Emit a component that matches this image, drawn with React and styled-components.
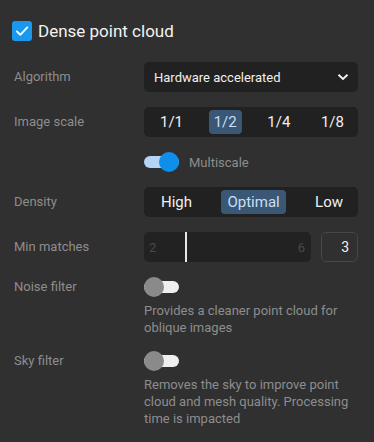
import React from "react";
import styled, { createGlobalStyle } from "styled-components";

const Global = createGlobalStyle`
  html, body { margin: 0; padding: 0; background: #303030; }
  body { font-family: Roboto, "Noto Sans", sans-serif; -webkit-font-smoothing: antialiased; }
`;

const Panel = styled.div`
  width: 374px;
  height: 442px;
  box-sizing: border-box;
  padding: 21px 16px 0 12px;
  background: #303030;
  overflow: hidden;
`;

const Header = styled.label`
  display: flex;
  align-items: center;
  gap: 6px;
  height: 20px;
`;

const CheckBox = styled.span`
  width: 20px;
  height: 20px;
  border-radius: 3px;
  background: #1a98ee;
  display: flex;
  align-items: center;
  justify-content: center;
`;

const Title = styled.span`
  font-size: 17px;
  color: #f2f2f2;
  line-height: 20px;
`;

const Form = styled.div`
  margin-top: 21px;
  padding-left: 2px;
  display: flex;
  flex-direction: column;
  gap: 15px;
`;

const Row = styled.div`
  display: grid;
  grid-template-columns: 130px 214px;
  align-items: start;
`;

const Label = styled.div`
  font-size: 13px;
  color: #8d8d8d;
  line-height: ${(p) => p.$h}px;
  height: ${(p) => p.$h}px;
`;

const Control = styled.div`
  display: flex;
  flex-direction: column;
`;

const Select = styled.div`
  height: 30px;
  border-radius: 5px;
  background: #212121;
  display: flex;
  align-items: center;
  justify-content: space-between;
  padding: 0 9px 0 10px;
  font-size: 13px;
  color: #f0f0f0;
`;

const Segmented = styled.div`
  height: 30px;
  box-sizing: border-box;
  border-radius: 5px;
  background: #212121;
  display: flex;
  align-items: center;
  justify-content: space-between;
  padding: 0 9px 0 11px;
`;

const Segment = styled.div`
  height: 24px;
  line-height: 24px;
  padding: 0 ${(p) => p.$pad}px;
  border-radius: 4px;
  font-size: 15px;
  color: ${(p) => (p.$active ? "#c9dff3" : "#f0f0f0")};
  background: ${(p) => (p.$active ? "#3a5876" : "transparent")};
`;

const ToggleLine = styled.div`
  display: flex;
  align-items: center;
  gap: 10px;
  height: 20px;
`;

const Track = styled.div`
  position: relative;
  width: 35px;
  height: 20px;
  flex: none;
  &::before {
    content: "";
    position: absolute;
    left: 0;
    right: 0;
    top: 4px;
    height: 12px;
    border-radius: 6px;
    background: ${(p) => (p.$on ? "#b4d5f4" : "#efefef")};
  }
`;

const Knob = styled.span`
  position: absolute;
  top: 0;
  ${(p) => (p.$on ? "right: 0;" : "left: 0;")}
  width: 20px;
  height: 20px;
  border-radius: 50%;
  background: ${(p) => (p.$on ? "#0d8fea" : "#8a8a8a")};
`;

const ToggleText = styled.span`
  font-size: 13px;
  color: #8d8d8d;
`;

const Desc = styled.div`
  margin-top: 5px;
  font-size: 13px;
  line-height: 17px;
  color: #8d8d8d;
`;

const SliderLine = styled.div`
  display: flex;
  gap: 10px;
`;

const SliderBox = styled.div`
  position: relative;
  flex: 1;
  height: 30px;
  border-radius: 5px;
  background: #222222;
  display: flex;
  align-items: center;
  justify-content: space-between;
  padding: 0 6px 0 5px;
  font-size: 13px;
  color: #4a4a4a;
`;

const Thumb = styled.span`
  position: absolute;
  top: 0;
  bottom: 0;
  width: 2px;
  background: #e6e6e6;
`;

const NumberBox = styled.div`
  width: 37px;
  height: 30px;
  box-sizing: border-box;
  border: 1px solid #474747;
  border-radius: 5px;
  display: flex;
  align-items: center;
  justify-content: flex-end;
  padding-right: 8px;
  font-size: 14px;
  color: #f2f2f2;
`;

function Toggle({ on, children }) {
  return (
    <ToggleLine>
      <Track $on={on}>
        <Knob $on={on} />
      </Track>
      {children && <ToggleText>{children}</ToggleText>}
    </ToggleLine>
  );
}

function Seg({ options, active, pad }) {
  return (
    <Segmented>
      {options.map((o) => (
        <Segment key={o} $active={o === active} $pad={pad}>
          {o}
        </Segment>
      ))}
    </Segmented>
  );
}

export default function App() {
  const min = 2, max = 6, val = 3;
  const pct = ((val - min) / (max - min)) * 100;
  return (
    <Panel>
      <Global />
      <Header>
        <CheckBox>
          <svg width="14" height="14" viewBox="0 0 14 14">
            <path d="M1.8 7.4 L5.3 10.8 L12.3 3.4" fill="none" stroke="#fff" strokeWidth="1.9" strokeLinecap="round" strokeLinejoin="round" />
          </svg>
        </CheckBox>
        <Title>Dense point cloud</Title>
      </Header>
      <Form>
        <Row>
          <Label $h={30}>Algorithm</Label>
          <Select>
            <span>Hardware accelerated</span>
            <svg width="12" height="8" viewBox="0 0 12 8">
              <path d="M1.5 1.8 L6 6 L10.5 1.8" fill="none" stroke="#f0f0f0" strokeWidth="2" />
            </svg>
          </Select>
        </Row>
        <Row>
          <Label $h={30}>Image scale</Label>
          <Seg options={["1/1", "1/2", "1/4", "1/8"]} active="1/2" pad={5} />
        </Row>
        <Row>
          <Label $h={20} />
          <Toggle on>Multiscale</Toggle>
        </Row>
        <Row>
          <Label $h={30}>Density</Label>
          <Seg options={["High", "Optimal", "Low"]} active="Optimal" pad={6} />
        </Row>
        <Row>
          <Label $h={30}>Min matches</Label>
          <SliderLine>
            <SliderBox>
              <span>{min}</span>
              <Thumb style={{ left: `calc(${pct}% - 1px)` }} />
              <span>{max}</span>
            </SliderBox>
            <NumberBox>{val}</NumberBox>
          </SliderLine>
        </Row>
        <Row>
          <Label $h={20}>Noise filter</Label>
          <Control>
            <Toggle on={false} />
            <Desc>Provides a cleaner point cloud for oblique images</Desc>
          </Control>
        </Row>
        <Row>
          <Label $h={20}>Sky filter</Label>
          <Control>
            <Toggle on={false} />
            <Desc>Removes the sky to improve point cloud and mesh quality. Processing time is impacted</Desc>
          </Control>
        </Row>
      </Form>
    </Panel>
  );
}
